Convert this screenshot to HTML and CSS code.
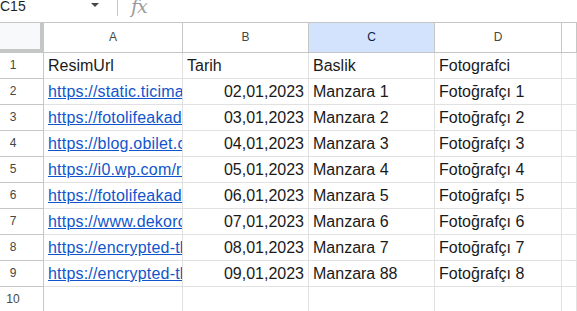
FILE: index.html
```html
<!DOCTYPE html>
<html>
	<head>
		<meta charset="UTF-8" />
		<meta name="viewport" content="width=device-width, initial-scale=1.0" />
		<link rel="stylesheet" href="styles.css">
	</head>
	<body>
	<div class="topbar">
		<div class="namebox">
			<span class="cellref">C15</span>
			<span class="caret"></span>
		</div>
		<span class="divider"></span>
		<span class="fx">fx</span>
	</div>

	<div class="sheet">
		<!-- column headers -->
		<div class="corner"></div>
		<div class="colhead">A</div>
		<div class="colhead">B</div>
		<div class="colhead selected">C</div>
		<div class="colhead">D</div>
		<div class="colhead"></div>

		<div class="rowhead">1</div>
		<div class="cell">ResimUrl</div>
		<div class="cell">Tarih</div>
		<div class="cell">Baslik</div>
		<div class="cell">Fotografci</div>
		<div class="cell"></div>

		<div class="rowhead">2</div>
		<div class="cell"><a class="link">https://static.ticimax.cloud/images/manzara1.jpg</a></div>
		<div class="cell num">02,01,2023</div>
		<div class="cell">Manzara 1</div>
		<div class="cell">Fotoğrafçı 1</div>
		<div class="cell"></div>

		<div class="rowhead">3</div>
		<div class="cell"><a class="link">https://fotolifeakademi.com/manzara2.jpg</a></div>
		<div class="cell num">03,01,2023</div>
		<div class="cell">Manzara 2</div>
		<div class="cell">Fotoğrafçı 2</div>
		<div class="cell"></div>

		<div class="rowhead">4</div>
		<div class="cell"><a class="link">https://blog.obilet.com/manzara3.jpg</a></div>
		<div class="cell num">04,01,2023</div>
		<div class="cell">Manzara 3</div>
		<div class="cell">Fotoğrafçı 3</div>
		<div class="cell"></div>

		<div class="rowhead">5</div>
		<div class="cell"><a class="link">https://i0.wp.com/resim/manzara4.jpg</a></div>
		<div class="cell num">05,01,2023</div>
		<div class="cell">Manzara 4</div>
		<div class="cell">Fotoğrafçı 4</div>
		<div class="cell"></div>

		<div class="rowhead">6</div>
		<div class="cell"><a class="link">https://fotolifeakademi.com/manzara5.jpg</a></div>
		<div class="cell num">06,01,2023</div>
		<div class="cell">Manzara 5</div>
		<div class="cell">Fotoğrafçı 5</div>
		<div class="cell"></div>

		<div class="rowhead">7</div>
		<div class="cell"><a class="link">https://www.dekorcenneti.com/manzara6.jpg</a></div>
		<div class="cell num">07,01,2023</div>
		<div class="cell">Manzara 6</div>
		<div class="cell">Fotoğrafçı 6</div>
		<div class="cell"></div>

		<div class="rowhead">8</div>
		<div class="cell"><a class="link">https://encrypted-tbn0.gstatic.com/images?q=7</a></div>
		<div class="cell num">08,01,2023</div>
		<div class="cell">Manzara 7</div>
		<div class="cell">Fotoğrafçı 7</div>
		<div class="cell"></div>

		<div class="rowhead">9</div>
		<div class="cell"><a class="link">https://encrypted-tbn0.gstatic.com/images?q=8</a></div>
		<div class="cell num">09,01,2023</div>
		<div class="cell">Manzara 88</div>
		<div class="cell">Fotoğrafçı 8</div>
		<div class="cell"></div>

		<div class="rowhead">10</div>
		<div class="cell"></div>
		<div class="cell"></div>
		<div class="cell"></div>
		<div class="cell"></div>
		<div class="cell"></div>
	</div>
	</body>
</html>
```

FILE: styles.css
```css
body {
	margin: 0;
	background: #fff;
	font-family: "Liberation Sans", Arial, sans-serif;
	color: #1f1f1f;
	overflow: hidden;
}

/* formula bar (top cut off) */
.topbar {
	height: 22px;
	border-bottom: 1px solid #c4c7c5;
	display: flex;
	align-items: flex-start;
}

.namebox {
	width: 117px;
	display: flex;
	align-items: flex-start;
}

.cellref {
	font-size: 14px;
	line-height: 12px;
	color: #1f1f1f;
	flex: 1;
}

.caret {
	width: 0;
	height: 0;
	margin: 3px 18px 0 0;
	border-left: 4px solid transparent;
	border-right: 4px solid transparent;
	border-top: 4px solid #444746;
}

.divider {
	width: 1px;
	height: 16px;
	background: #c4c7c5;
}

.fx {
	margin-left: 13px;
	font-family: "DejaVu Serif", serif;
	font-style: italic;
	font-size: 19px;
	line-height: 12px;
	color: #9a9a9a;
	letter-spacing: -1px;
}

/* grid */
.sheet {
	display: grid;
	grid-template-columns: 44px 139px 126px 126px 127px 1fr;
	grid-template-rows: 30px;
	grid-auto-rows: 26px;
}

.sheet > div {
	box-sizing: border-box;
	white-space: nowrap;
	overflow: hidden;
}

.corner {
	background: #f8f9fa;
	border-right: 4px solid #c4c7c5;
	border-bottom: 4px solid #c4c7c5;
}

.colhead {
	border-right: 1px solid #c4c7c5;
	border-bottom: 1px solid #c4c7c5;
	text-align: center;
	font-size: 12px;
	line-height: 29px;
	color: #444746;
}

.colhead.selected {
	background: #d3e3fd;
	color: #0b1f44;
}

.rowhead {
	border-right: 1px solid #c4c7c5;
	border-bottom: 1px solid #c4c7c5;
	padding-right: 17px;
	text-align: center;
	font-size: 12px;
	line-height: 25px;
	color: #444746;
}

.cell {
	border-right: 1px solid #e1e1e1;
	border-bottom: 1px solid #e1e1e1;
	padding: 0 4px;
	font-size: 16px;
	line-height: 25px;
	color: #1a1a1a;
	text-overflow: clip;
}

.num {
	text-align: right;
}

.link {
	color: #1155cc;
	text-decoration: underline;
	letter-spacing: 0.2px;
}
```
